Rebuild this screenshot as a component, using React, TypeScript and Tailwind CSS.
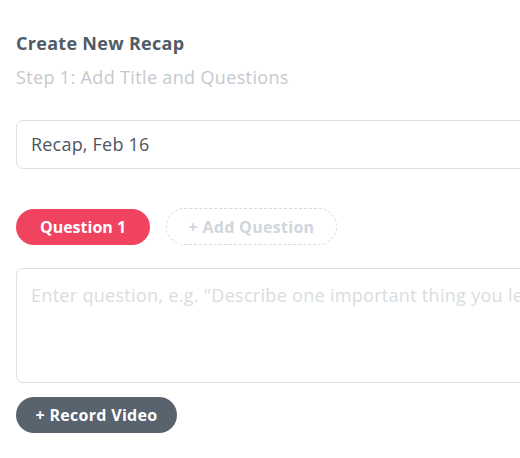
import React from "react";

export default function App() {
  return (
    <div className="w-[520px] h-[458px] bg-white overflow-hidden" style={{ fontFamily: "'Open Sans', Lato, sans-serif" }}>
      <div className="pl-4 pt-[31px] w-[620px]">
        <div className="text-[18px] font-bold text-[#505b67] leading-[24px] tracking-[0.3px]">Create New Recap</div>
        <div className="mt-[10px] text-[18px] text-[#c5c9cd] leading-[24px] tracking-[0.35px]">Step 1: Add Title and Questions</div>
        <div className="mt-[31px] h-[49px] rounded-[7px] border border-[#dde1e5] flex items-center px-[14px] text-[18px] text-[#4c5661] tracking-[0.2px]">
          Recap, Feb 16
        </div>
        <div className="mt-[39px] flex gap-[16px] items-center">
          <div className="h-[36px] w-[134px] rounded-full bg-[#ef4360] text-white font-bold text-[16px] flex items-center justify-center">
            Question 1
          </div>
          <div className="h-[37px] w-[171px] rounded-full border border-dashed border-[#d5dade] text-[#cfd6dc] font-bold text-[16px] tracking-[0.3px] flex items-center justify-center">
            + Add Question
          </div>
        </div>
        <div className="mt-[23px] h-[115px] rounded-[7px] border border-[#dde1e5] px-[14px] pt-[14px] text-[18px] text-[#d8dde1] leading-[24px] tracking-[0.3px] whitespace-nowrap overflow-hidden">
          Enter question, e.g. "Describe one important thing you learned today"
        </div>
        <div className="mt-[14px] h-[36px] w-[161px] rounded-full bg-[#59636e] text-white font-bold text-[16px] tracking-[0.3px] flex items-center justify-center">
          + Record Video
        </div>
      </div>
    </div>
  );
}
